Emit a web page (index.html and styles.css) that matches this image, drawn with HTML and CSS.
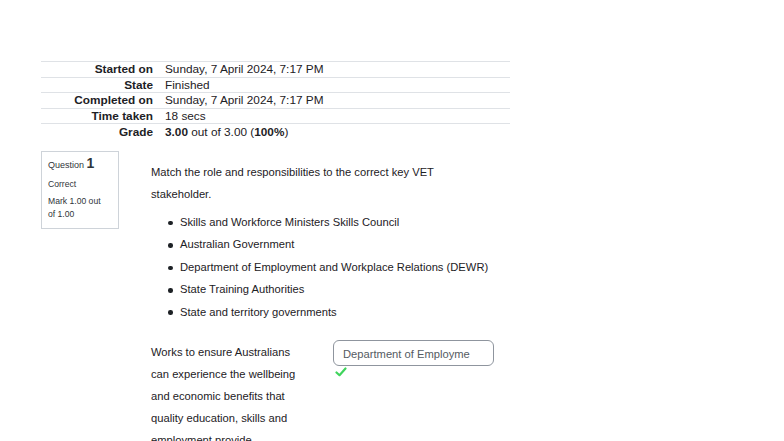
FILE: index.html
```html
<!DOCTYPE html>
<html lang="en">
<head>
    <meta charset="UTF-8">
    <title>Quiz review</title>
    <link rel="stylesheet" href="styles.css">
</head>
<body>
<div class="page">
    <table class="summary">
        <tr><th>Started on</th><td>Sunday, 7 April 2024, 7:17 PM</td></tr>
        <tr><th>State</th><td>Finished</td></tr>
        <tr><th>Completed on</th><td>Sunday, 7 April 2024, 7:17 PM</td></tr>
        <tr><th>Time taken</th><td>18 secs</td></tr>
        <tr><th>Grade</th><td><b>3.00</b> out of 3.00 (<b>100%</b>)</td></tr>
    </table>

    <div class="question">
        <div class="info">
            <h3 class="qno">Question <span>1</span></h3>
            <div class="state">Correct</div>
            <div class="grade">Mark 1.00 out of 1.00</div>
        </div>
        <div class="content">
            <p class="qtext">Match the role and responsibilities to the correct key VET stakeholder.</p>
            <ul class="options">
                <li>Skills and Workforce Ministers Skills Council</li>
                <li>Australian Government</li>
                <li>Department of Employment and Workplace Relations (DEWR)</li>
                <li>State Training Authorities</li>
                <li>State and territory governments</li>
            </ul>
            <div class="match-row">
                <div class="match-text">Works to ensure Australians can experience the wellbeing and economic benefits that quality education, skills and employment provide.</div>
                <div class="match-answer">
                    <div class="select">Department of Employme</div>
                    <svg class="tick" width="12" height="10" viewBox="0 0 12 10">
                        <path d="M1.5 5.5 L4.5 8.2 L10.5 1.5" fill="none" stroke="#3fd45c" stroke-width="2.2" stroke-linecap="round" stroke-linejoin="round"/>
                    </svg>
                </div>
            </div>
        </div>
    </div>
</div>
</body>
</html>
```

FILE: styles.css
```css
body {
    margin: 0;
    font-family: "Liberation Sans", Arial, sans-serif;
    color: #1d2125;
    background: #fff;
}

.page {
    padding: 61px 0 0 41px;
}

.summary {
    width: 469px;
    border-collapse: collapse;
    font-size: 11.8px;
}

.summary tr {
    border-top: 1.5px solid #dfe2e6;
    height: 15.5px;
}

.summary th {
    width: 112px;
    text-align: right;
    font-weight: bold;
    padding: 0 12px 0 0;
    line-height: 14px;
    white-space: nowrap;
}

.summary td {
    padding: 0;
    line-height: 14px;
}

.question {
    display: flex;
    gap: 32px;
    margin-top: 12px;
}

.info {
    width: 60px;
    height: 66px;
    flex-shrink: 0;
    border: 1px solid #ced3d9;
    padding: 5px 10px 5px 6px;
    font-size: 8.6px;
    line-height: 13px;
    color: #30353a;
}

.qno {
    margin: 0 0 6px;
    font-size: 9px;
    font-weight: normal;
}

.qno span {
    font-size: 14px;
    font-weight: bold;
}

.state {
    margin-bottom: 4px;
}

.content {
    width: 370px;
    padding-top: 10px;
    font-size: 11.2px;
    line-height: 22px;
}

.qtext {
    margin: 0 0 6px;
    width: 300px;
}

.options {
    margin: 0;
    padding-left: 17px;
    list-style: none;
    line-height: 22.4px;
}

.options li::before {
    content: "";
    display: inline-block;
    width: 4.5px;
    height: 4.5px;
    margin: 0 7.5px 0 0;
    border-radius: 50%;
    background: #1d2125;
    vertical-align: middle;
}

.match-row {
    display: flex;
    gap: 32px;
    margin-top: 18px;
}

.match-text {
    width: 150px;
    flex-shrink: 0;
}

.select {
    width: 150px;
    height: 24px;
    margin-top: -1px;
    border: 1px solid #8f959e;
    border-radius: 6px;
    padding-left: 9px;
    color: #555b62;
    line-height: 26px;
    white-space: nowrap;
    overflow: hidden;
}

.tick {
    display: block;
    margin: 1px 0 0 2px;
}
```
